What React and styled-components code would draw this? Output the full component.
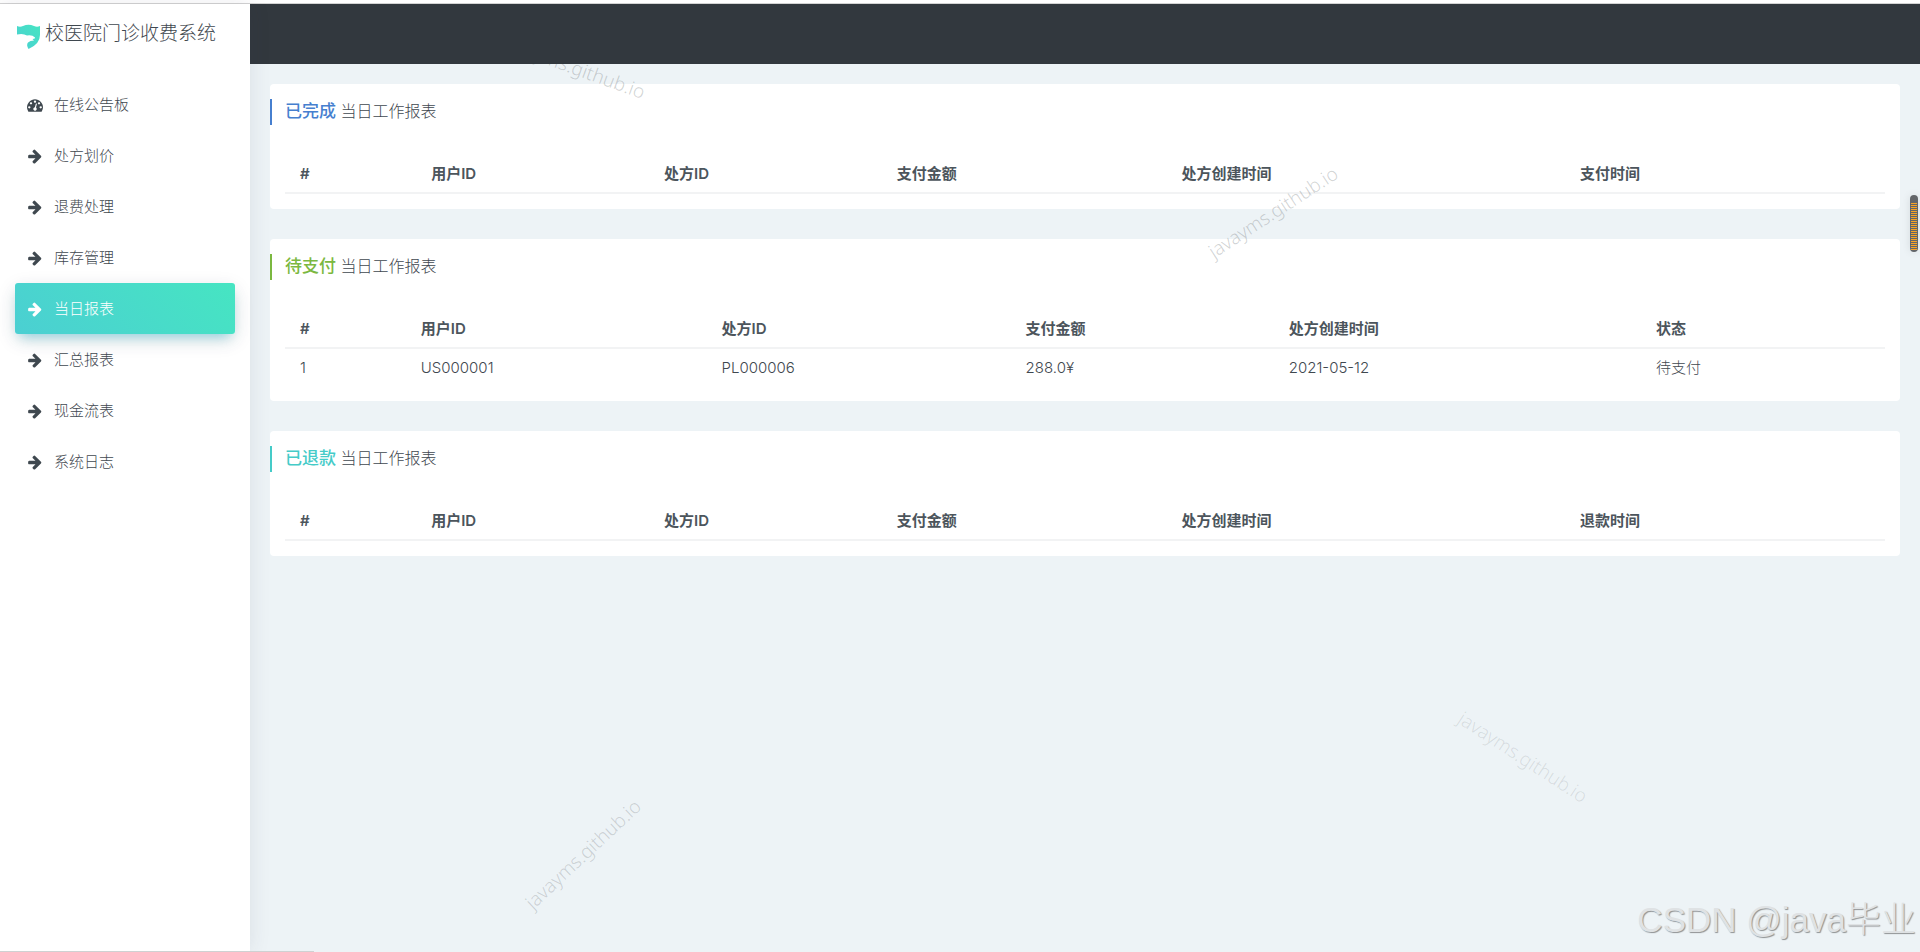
import React from 'react';
import styled, { createGlobalStyle } from 'styled-components';

const GlobalStyle = createGlobalStyle`
  *, *::before, *::after { box-sizing: border-box; }
  body {
    margin: 0;
    background: #edf3f6;
    color: #3f484f;
    font-family: Inter, "Noto Sans CJK SC", sans-serif;
    font-size: 15px;
    font-weight: 300;
    line-height: 21px;
  }
`;

const Page = styled.div`
  position: relative;
  display: flex;
  flex-direction: column;
  min-height: 100vh;
  overflow: hidden;
`;

const TopStrip = styled.div`
  height: 4px;
  background: #fff;
  border-bottom: 1px solid #d3d3d3;
`;

const Shell = styled.div`
  display: flex;
  flex: 1;
`;

const Sidebar = styled.aside`
  position: relative;
  z-index: 1;
  flex: 0 0 250px;
  background: #fff;
  box-shadow: 0 0 20px rgba(50, 50, 80, 0.1);
`;

const Brand = styled.a`
  display: flex;
  align-items: center;
  gap: 4px;
  height: 60px;
  padding: 0 16px;
  color: #3f484f;
  font-size: 19px;
  text-decoration: none;
`;

const BrandName = styled.span`
  height: 30px;
  line-height: 30px;
`;

const Nav = styled.nav`
  display: flex;
  flex-direction: column;
  padding: 15px;
`;

const NavLink = styled.a`
  display: flex;
  align-items: center;
  gap: 11px;
  height: 51px;
  padding: 0 12px;
  border-radius: 3px;
  color: ${(p) => (p.$active ? '#fff' : '#3f484f')};
  background: ${(p) => (p.$active ? 'linear-gradient(45deg, #4bcfd2, #46e5c2)' : 'none')};
  box-shadow: ${(p) => (p.$active ? '0 7px 12px -5px rgba(75, 190, 215, 0.6), 0 6px 20px rgba(0, 0, 0, 0.12)' : 'none')};
  text-decoration: none;
`;

const Content = styled.div`
  display: flex;
  flex: 1;
  flex-direction: column;
  min-width: 0;
`;

const Header = styled.header`
  height: 60px;
  background: #32383e;
`;

const Main = styled.main`
  position: relative;
  display: flex;
  flex: 1;
  flex-direction: column;
  gap: 30px;
  padding: 20px;
  overflow: hidden;
`;

const Card = styled.section`
  padding: 15px 0;
  border-radius: 4px;
  background: #fff;
`;

const CardTitle = styled.h2`
  margin: 0 0 30px;
  padding-left: 13px;
  border-left: 2px solid ${(p) => p.$color};
  font-size: 16px;
  font-weight: 300;
  line-height: 24px;
  padding-bottom: 2px;
`;

const Status = styled.span`
  color: ${(p) => p.$color};
  font-size: 17px;
  font-weight: 500;
`;

const TableWrap = styled.div`
  padding: 0 15px;
`;

const Table = styled.table`
  width: 100%;
  border-collapse: separate;
  border-spacing: 0;
  table-layout: fixed;
  text-align: left;
`;

const Col = styled.col`
  width: ${(p) => p.$width}%;
`;

const Th = styled.th`
  padding: 8px 15px;
  border-bottom: 2px solid #f2f3f4;
  color: #4c555c;
  font-weight: 600;
`;

const Td = styled.td`
  padding: 8px 15px;
`;

const Watermark = styled.span`
  position: absolute;
  left: ${(p) => p.$x}px;
  top: ${(p) => p.$y}px;
  color: rgba(90, 95, 100, ${(p) => p.$alpha});
  font-family: "Noto Sans", sans-serif;
  font-size: 19px;
  font-weight: 300;
  line-height: 24px;
  white-space: nowrap;
  pointer-events: none;
  transform: translate(-50%, -50%) rotate(${(p) => p.$angle}deg);
`;

const Credit = styled.span`
  position: absolute;
  right: 4px;
  bottom: 9px;
  color: #dfe2e4;
  font-family: "Liberation Sans", "Noto Sans CJK SC", sans-serif;
  font-size: 35px;
  font-weight: 300;
  line-height: 46px;
  text-shadow: 1px 1px 1px #8f9294;
  pointer-events: none;
`;

const ScrollMeter = styled.div`
  position: absolute;
  top: 195px;
  right: 2px;
  width: 8px;
  height: 57px;
  padding: 8px 1px 2px;
  border-radius: 4px;
  background: #626569;
  box-shadow: 0 0 8px rgba(0, 0, 0, 0.1);

  &::before {
    display: block;
    height: 100%;
    background: repeating-linear-gradient(#f7a326 0 1px, #626569 1px 2px);
    content: '';
  }
`;

const StatusEdge = styled.div`
  position: absolute;
  bottom: 0;
  left: 0;
  z-index: 2;
  width: 314px;
  height: 1px;
  background: #cfd1d2;
`;

const LogoMark = () => (
  <svg width="25" height="30" viewBox="0 0 25 30" aria-hidden="true">
    <defs>
      <linearGradient id="logo" x1="0" y1="1" x2="1" y2="0">
        <stop offset="0" stopColor="#4bcfd2" />
        <stop offset="1" stopColor="#46e5c2" />
      </linearGradient>
    </defs>
    <path
      fill="url(#logo)"
      d="M1 7Q4 8.5 7 7Q12.500 4.500 18 7Q21 8.500 24 7V16Q24 25 12.500 30Q10 26 12 23.500Q14 21.500 18 21.500L16.500 20Q19.500 19.500 19 18.500Q16 15.500 11 16.500Q7 14 1 15.500Z"
    />
  </svg>
);

const ArrowIcon = () => (
  <svg width="16" height="16" viewBox="0 0 1536 1792" fill="currentColor" aria-hidden="true">
    <path d="M1472 960q0 54-37 91l-651 651q-39 37-91 37-51 0-90-37l-75-75q-38-38-38-91t38-91l293-293h-704q-52 0-84.5-37.5t-32.5-90.5v-128q0-53 32.5-90.5t84.5-37.5h704l-293-294q-38-36-38-90t38-90l75-75q38-38 90-38 53 0 91 38l651 651q37 35 37 90z" />
  </svg>
);

const DashboardIcon = () => (
  <svg width="16" height="16" viewBox="0 0 1792 1792" fill="currentColor" aria-hidden="true">
    <path d="M384 1152q0-53-37.5-90.5t-90.5-37.5-90.5 37.5-37.5 90.5 37.5 90.5 90.5 37.5 90.5-37.5 37.5-90.5zm192-448q0-53-37.5-90.5t-90.5-37.5-90.5 37.5-37.5 90.5 37.5 90.5 90.5 37.5 90.5-37.5 37.5-90.5zm428 481l101-382q6-26-7.5-48.5t-38.5-29.5-48 6.5-30 39.5l-101 382q-60 5-107 43.5t-63 98.5q-20 77 20 146t117 89 146-20 89-117q16-60-6-117t-72-91zm660-33q0-53-37.5-90.5t-90.5-37.5-90.5 37.5-37.5 90.5 37.5 90.5 90.5 37.5 90.5-37.5 37.5-90.5zm-640-640q0-53-37.5-90.5t-90.5-37.5-90.5 37.5-37.5 90.5 37.5 90.5 90.5 37.5 90.5-37.5 37.5-90.5zm448 192q0-53-37.5-90.5t-90.5-37.5-90.5 37.5-37.5 90.5 37.5 90.5 90.5 37.5 90.5-37.5 37.5-90.5zm320 448q0 261-141 483-19 29-54 29h-1402q-35 0-54-29-141-221-141-483 0-182 71-348t191-286 286-191 348-71 348 71 286 191 191 286 71 348z" />
  </svg>
);

const navItems = [
  { label: '在线公告板', icon: DashboardIcon },
  { label: '处方划价', icon: ArrowIcon },
  { label: '退费处理', icon: ArrowIcon },
  { label: '库存管理', icon: ArrowIcon },
  { label: '当日报表', icon: ArrowIcon, active: true },
  { label: '汇总报表', icon: ArrowIcon },
  { label: '现金流表', icon: ArrowIcon },
  { label: '系统日志', icon: ArrowIcon },
];

const emptyWidths = [8.2, 14.55, 14.55, 17.8, 24.9, 20];
const filledWidths = [7.55, 18.8, 19, 16.45, 22.95, 15.25];

const reports = [
  {
    status: '已完成',
    color: '#467fcf',
    widths: emptyWidths,
    columns: ['#', '用户ID', '处方ID', '支付金额', '处方创建时间', '支付时间'],
    rows: [],
  },
  {
    status: '待支付',
    color: '#7bb840',
    widths: filledWidths,
    columns: ['#', '用户ID', '处方ID', '支付金额', '处方创建时间', '状态'],
    rows: [['1', 'US000001', 'PL000006', '288.0¥', '2021-05-12', '待支付']],
  },
  {
    status: '已退款',
    color: '#45cbc8',
    widths: emptyWidths,
    columns: ['#', '用户ID', '处方ID', '支付金额', '处方创建时间', '退款时间'],
    rows: [],
  },
];

const watermarks = [
  { x: 324, y: 3, angle: 20, alpha: 0.28 },
  { x: 1023, y: 148, angle: -33, alpha: 0.28 },
  { x: 333, y: 790, angle: -43, alpha: 0.24 },
  { x: 1273, y: 693, angle: 33, alpha: 0.16 },
];

const Report = ({ status, color, widths, columns, rows }) => (
  <Card>
    <CardTitle $color={color}>
      <Status $color={color}>{status}</Status> 当日工作报表
    </CardTitle>
    <TableWrap>
      <Table>
        <colgroup>
          {widths.map((width, i) => (
            <Col key={i} $width={width} />
          ))}
        </colgroup>
        <thead>
          <tr>
            {columns.map((name) => (
              <Th key={name} scope="col">{name}</Th>
            ))}
          </tr>
        </thead>
        <tbody>
          {rows.map((row) => (
            <tr key={row[0]}>
              {row.map((value, i) => (
                <Td key={i}>{value}</Td>
              ))}
            </tr>
          ))}
        </tbody>
      </Table>
    </TableWrap>
  </Card>
);

export default function App() {
  return (
    <Page>
      <GlobalStyle />
      <TopStrip />
      <Shell>
        <Sidebar>
          <Brand href="#">
            <LogoMark />
            <BrandName>校医院门诊收费系统</BrandName>
          </Brand>
          <Nav>
            {navItems.map(({ label, icon: Icon, active }) => (
              <NavLink key={label} href="#" $active={active}>
                <Icon />
                {label}
              </NavLink>
            ))}
          </Nav>
        </Sidebar>
        <Content>
          <Header />
          <Main>
            {reports.map((report) => (
              <Report key={report.status} {...report} />
            ))}
            {watermarks.map(({ x, y, angle, alpha }) => (
              <Watermark key={x} $x={x} $y={y} $angle={angle} $alpha={alpha} aria-hidden="true">
                javayms.github.io
              </Watermark>
            ))}
          </Main>
        </Content>
      </Shell>
      <ScrollMeter />
      <StatusEdge />
      <Credit>CSDN @java毕业</Credit>
    </Page>
  );
}
